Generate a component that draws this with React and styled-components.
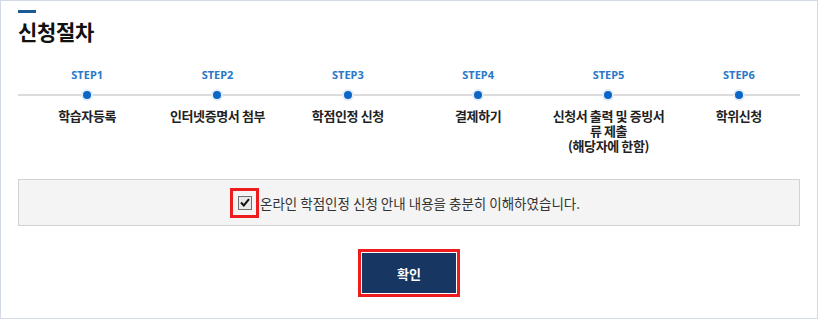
import React, { useState } from "react";
import styled, { createGlobalStyle } from "styled-components";

const GlobalStyle = createGlobalStyle`
  html, body { margin: 0; padding: 0; background: #fff; }
  body { font-family: "Noto Sans CJK KR", "Noto Sans", sans-serif; }
`;

const Frame = styled.div`
  box-sizing: border-box;
  width: 818px;
  height: 319px;
  border: 1px solid #d3d9e6;
  padding: 9px 17px 0 17px;
  display: flex;
  flex-direction: column;
`;

const TitleBar = styled.span`
  display: block;
  width: 18px;
  height: 3px;
  background: #1c5a96;
`;

const Title = styled.h2`
  margin: 6px 0 0 0;
  font-size: 21px;
  line-height: 24px;
  font-weight: 700;
  color: #111;
  letter-spacing: -0.3px;
`;

const Steps = styled.ol`
  position: relative;
  list-style: none;
  margin: 25px -4px 0 0;
  padding: 0 0 0 4px;
  display: grid;
  grid-template-columns: repeat(6, 1fr);
  width: 786px;
  box-sizing: border-box;
  &::before {
    content: "";
    position: absolute;
    left: 0;
    right: 4px;
    top: 26px;
    height: 2px;
    background: #dcdcdc;
  }
`;

const Step = styled.li`
  display: flex;
  flex-direction: column;
  align-items: center;
  text-align: center;
  position: relative;
`;

const StepNo = styled.span`
  font-family: "Noto Sans", sans-serif;
  font-size: 11px;
  line-height: 14px;
  font-weight: 700;
  color: #2a78c8;
`;

const DotRow = styled.span`
  display: flex;
  align-items: center;
  justify-content: center;
  height: 14px;
  margin-top: 6px;
`;

const Dot = styled.span`
  width: 8px;
  height: 8px;
  border-radius: 50%;
  background: #0b66c6;
  box-shadow: 0 0 0 2px #e3edf8;
`;

const StepName = styled.span`
  margin-top: 6px;
  max-width: 128px;
  font-size: 13px;
  line-height: 15px;
  font-weight: 700;
  color: #222;
  letter-spacing: -0.4px;
  word-break: keep-all;
`;

const AgreeBox = styled.div`
  box-sizing: border-box;
  margin-top: 26px;
  width: 782px;
  height: 47px;
  border: 1px solid #d2d2d2;
  background: #f4f4f4;
  display: flex;
  align-items: center;
  justify-content: center;
  padding-right: 8px;
`;

const AgreeLabel = styled.label`
  display: flex;
  align-items: center;
  cursor: pointer;
  font-size: 13.5px;
  color: #333;
`;

const CheckFrame = styled.span`
  box-sizing: border-box;
  width: 29px;
  height: 30px;
  border: 3px solid #ee1c1c;
  display: flex;
  align-items: center;
  justify-content: center;
  margin-right: 1px;
`;

const CheckBox = styled.span`
  box-sizing: border-box;
  width: 14px;
  height: 14px;
  border: 1px solid #707070;
  background: #e9e9e9;
  display: flex;
  align-items: center;
  justify-content: center;
`;

const ButtonRow = styled.div`
  display: flex;
  justify-content: center;
  margin-top: 27px;
  width: 782px;
`;

const ConfirmButton = styled.button`
  width: 94px;
  height: 40px;
  border: none;
  background: #173762;
  color: #fff;
  font-family: "Noto Sans CJK KR", sans-serif;
  font-size: 13px;
  font-weight: 700;
  outline: 3px solid #ee1c1c;
  outline-offset: 1px;
  cursor: pointer;
`;

const steps = [
  "학습자등록",
  "인터넷증명서 첨부",
  "학점인정 신청",
  "결제하기",
  "신청서 출력 및 증빙서류 제출 (해당자에 한함)",
  "학위신청",
];

export default function App() {
  const [checked, setChecked] = useState(true);
  return (
    <>
      <GlobalStyle />
      <Frame>
        <TitleBar />
        <Title>신청절차</Title>
        <Steps>
          {steps.map((name, i) => (
            <Step key={i}>
              <StepNo>STEP{i + 1}</StepNo>
              <DotRow>
                <Dot />
              </DotRow>
              <StepName>
                {i === 4 ? (
                  <>
                    신청서 출력 및 증빙서
                    <br />
                    류 제출
                    <br />
                    (해당자에 한함)
                  </>
                ) : (
                  name
                )}
              </StepName>
            </Step>
          ))}
        </Steps>
        <AgreeBox>
          <AgreeLabel onClick={() => setChecked(!checked)}>
            <CheckFrame>
              <CheckBox>
                {checked && (
                  <svg width="10" height="9" viewBox="0 0 10 9">
                    <path d="M1 4.5 L3.8 7.5 L9 1.2" fill="none" stroke="#111" strokeWidth="2" />
                  </svg>
                )}
              </CheckBox>
            </CheckFrame>
            온라인 학점인정 신청 안내 내용을 충분히 이해하였습니다.
          </AgreeLabel>
        </AgreeBox>
        <ButtonRow>
          <ConfirmButton>확인</ConfirmButton>
        </ButtonRow>
      </Frame>
    </>
  );
}
